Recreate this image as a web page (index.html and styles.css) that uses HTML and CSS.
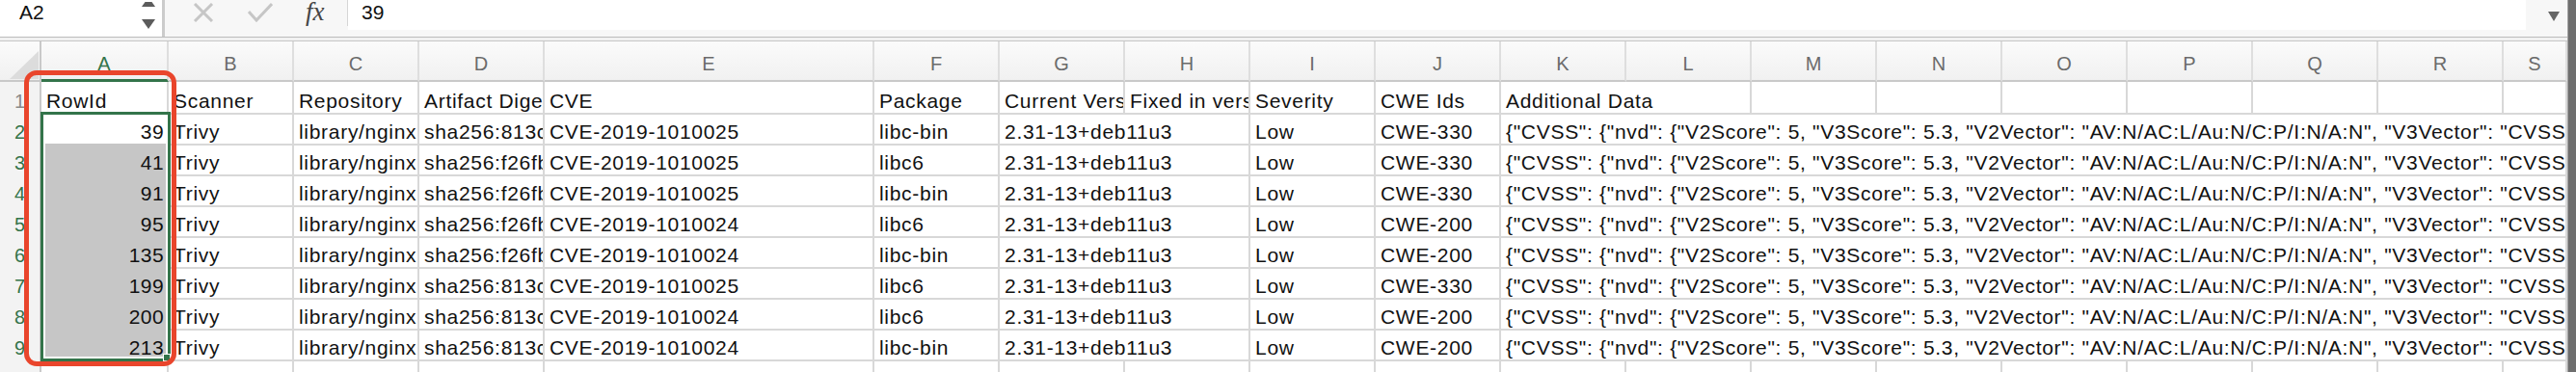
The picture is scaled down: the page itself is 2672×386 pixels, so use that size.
FILE: index.html
```html
<!DOCTYPE html>
<html lang="en">
<head>
    <meta charset="UTF-8">
    <meta name="viewport" content="width=device-width, initial-scale=1.0">
    <title>scan-results.xlsx</title>
    <link rel="stylesheet" href="styles.css">
</head>
<body>
    <div class="app">
        <div class="formula-bar">
            <div class="name-box">
                <span>A2</span>
                <svg class="spin" width="14" height="30" viewBox="0 0 14 30">
                    <polygon points="0,5 7,-5 14,5" fill="#5c5c5c"/>
                    <polygon points="0,18 14,18 7,28" fill="#5c5c5c"/>
                </svg>
            </div>
            <div class="bar-tools">
                <svg class="tool-x" width="22" height="20" viewBox="0 0 22 20">
                    <path d="M2 1 L20 19 M20 1 L2 19" stroke="#c6c6c6" stroke-width="3" fill="none"/>
                </svg>
                <svg class="tool-ok" width="26" height="21" viewBox="0 0 26 21">
                    <path d="M1 10 L9 19 L25 2" stroke="#c6c6c6" stroke-width="3" fill="none"/>
                </svg>
                <span class="fx">fx</span>
                <div class="bar-sep"></div>
            </div>
            <div class="formula-input">39</div>
            <div class="bar-end">
                <svg width="12" height="10" viewBox="0 0 12 10">
                    <polygon points="0,0 12,0 6,10" fill="#666"/>
                </svg>
            </div>
        </div>
        <div class="bar-divider"></div>

        <div class="sheet">
            <div class="row head">
                <div class="corner"><div class="corner-mark"></div></div>
                <div class="col sel-col">A</div>
                <div class="col">B</div>
                <div class="col">C</div>
                <div class="col">D</div>
                <div class="col">E</div>
                <div class="col">F</div>
                <div class="col">G</div>
                <div class="col">H</div>
                <div class="col">I</div>
                <div class="col">J</div>
                <div class="col">K</div>
                <div class="col">L</div>
                <div class="col">M</div>
                <div class="col">N</div>
                <div class="col">O</div>
                <div class="col">P</div>
                <div class="col">Q</div>
                <div class="col">R</div>
                <div class="col">S</div>
            </div>

            <div class="row">
                <div class="rh">1</div>
                <div class="cell">RowId</div>
                <div class="cell">Scanner</div>
                <div class="cell">Repository</div>
                <div class="cell">Artifact Digest</div>
                <div class="cell">CVE</div>
                <div class="cell">Package</div>
                <div class="cell">Current Version</div>
                <div class="cell">Fixed in version</div>
                <div class="cell">Severity</div>
                <div class="cell">CWE Ids</div>
                <div class="cell span2">Additional Data</div>
                <div class="cell"></div>
                <div class="cell"></div>
                <div class="cell"></div>
                <div class="cell"></div>
                <div class="cell"></div>
                <div class="cell"></div>
                <div class="cell"></div>
            </div>

            <div class="row">
                <div class="rh on">2</div>
                <div class="cell num">39</div>
                <div class="cell">Trivy</div>
                <div class="cell">library/nginx</div>
                <div class="cell">sha256:813c2a5e9d8b4f1c</div>
                <div class="cell">CVE-2019-1010025</div>
                <div class="cell">libc-bin</div>
                <div class="cell span2">2.31-13+deb11u3</div>
                <div class="cell">Low</div>
                <div class="cell">CWE-330</div>
                <div class="cell span9">{"CVSS": {"nvd": {"V2Score": 5, "V3Score": 5.3, "V2Vector": "AV:N/AC:L/Au:N/C:P/I:N/A:N", "V3Vector": "CVSS:3.1/AV:N/AC:L/PR:N/UI:N/S:U/C:L/I:N/A:N"}}}</div>
            </div>

            <div class="row">
                <div class="rh on">3</div>
                <div class="cell num sel">41</div>
                <div class="cell">Trivy</div>
                <div class="cell">library/nginx</div>
                <div class="cell">sha256:f26fb0e47c3a91d2</div>
                <div class="cell">CVE-2019-1010025</div>
                <div class="cell">libc6</div>
                <div class="cell span2">2.31-13+deb11u3</div>
                <div class="cell">Low</div>
                <div class="cell">CWE-330</div>
                <div class="cell span9">{"CVSS": {"nvd": {"V2Score": 5, "V3Score": 5.3, "V2Vector": "AV:N/AC:L/Au:N/C:P/I:N/A:N", "V3Vector": "CVSS:3.1/AV:N/AC:L/PR:N/UI:N/S:U/C:L/I:N/A:N"}}}</div>
            </div>

            <div class="row">
                <div class="rh on">4</div>
                <div class="cell num sel">91</div>
                <div class="cell">Trivy</div>
                <div class="cell">library/nginx</div>
                <div class="cell">sha256:f26fb0e47c3a91d2</div>
                <div class="cell">CVE-2019-1010025</div>
                <div class="cell">libc-bin</div>
                <div class="cell span2">2.31-13+deb11u3</div>
                <div class="cell">Low</div>
                <div class="cell">CWE-330</div>
                <div class="cell span9">{"CVSS": {"nvd": {"V2Score": 5, "V3Score": 5.3, "V2Vector": "AV:N/AC:L/Au:N/C:P/I:N/A:N", "V3Vector": "CVSS:3.1/AV:N/AC:L/PR:N/UI:N/S:U/C:L/I:N/A:N"}}}</div>
            </div>

            <div class="row">
                <div class="rh on">5</div>
                <div class="cell num sel">95</div>
                <div class="cell">Trivy</div>
                <div class="cell">library/nginx</div>
                <div class="cell">sha256:f26fb0e47c3a91d2</div>
                <div class="cell">CVE-2019-1010024</div>
                <div class="cell">libc6</div>
                <div class="cell span2">2.31-13+deb11u3</div>
                <div class="cell">Low</div>
                <div class="cell">CWE-200</div>
                <div class="cell span9">{"CVSS": {"nvd": {"V2Score": 5, "V3Score": 5.3, "V2Vector": "AV:N/AC:L/Au:N/C:P/I:N/A:N", "V3Vector": "CVSS:3.1/AV:N/AC:L/PR:N/UI:N/S:U/C:L/I:N/A:N"}}}</div>
            </div>

            <div class="row">
                <div class="rh on">6</div>
                <div class="cell num sel">135</div>
                <div class="cell">Trivy</div>
                <div class="cell">library/nginx</div>
                <div class="cell">sha256:f26fb0e47c3a91d2</div>
                <div class="cell">CVE-2019-1010024</div>
                <div class="cell">libc-bin</div>
                <div class="cell span2">2.31-13+deb11u3</div>
                <div class="cell">Low</div>
                <div class="cell">CWE-200</div>
                <div class="cell span9">{"CVSS": {"nvd": {"V2Score": 5, "V3Score": 5.3, "V2Vector": "AV:N/AC:L/Au:N/C:P/I:N/A:N", "V3Vector": "CVSS:3.1/AV:N/AC:L/PR:N/UI:N/S:U/C:L/I:N/A:N"}}}</div>
            </div>

            <div class="row">
                <div class="rh on">7</div>
                <div class="cell num sel">199</div>
                <div class="cell">Trivy</div>
                <div class="cell">library/nginx</div>
                <div class="cell">sha256:813c2a5e9d8b4f1c</div>
                <div class="cell">CVE-2019-1010025</div>
                <div class="cell">libc6</div>
                <div class="cell span2">2.31-13+deb11u3</div>
                <div class="cell">Low</div>
                <div class="cell">CWE-330</div>
                <div class="cell span9">{"CVSS": {"nvd": {"V2Score": 5, "V3Score": 5.3, "V2Vector": "AV:N/AC:L/Au:N/C:P/I:N/A:N", "V3Vector": "CVSS:3.1/AV:N/AC:L/PR:N/UI:N/S:U/C:L/I:N/A:N"}}}</div>
            </div>

            <div class="row">
                <div class="rh on">8</div>
                <div class="cell num sel">200</div>
                <div class="cell">Trivy</div>
                <div class="cell">library/nginx</div>
                <div class="cell">sha256:813c2a5e9d8b4f1c</div>
                <div class="cell">CVE-2019-1010024</div>
                <div class="cell">libc6</div>
                <div class="cell span2">2.31-13+deb11u3</div>
                <div class="cell">Low</div>
                <div class="cell">CWE-200</div>
                <div class="cell span9">{"CVSS": {"nvd": {"V2Score": 5, "V3Score": 5.3, "V2Vector": "AV:N/AC:L/Au:N/C:P/I:N/A:N", "V3Vector": "CVSS:3.1/AV:N/AC:L/PR:N/UI:N/S:U/C:L/I:N/A:N"}}}</div>
            </div>

            <div class="row">
                <div class="rh on">9</div>
                <div class="cell num sel">213</div>
                <div class="cell">Trivy</div>
                <div class="cell">library/nginx</div>
                <div class="cell">sha256:813c2a5e9d8b4f1c</div>
                <div class="cell">CVE-2019-1010024</div>
                <div class="cell">libc-bin</div>
                <div class="cell span2">2.31-13+deb11u3</div>
                <div class="cell">Low</div>
                <div class="cell">CWE-200</div>
                <div class="cell span9">{"CVSS": {"nvd": {"V2Score": 5, "V3Score": 5.3, "V2Vector": "AV:N/AC:L/Au:N/C:P/I:N/A:N", "V3Vector": "CVSS:3.1/AV:N/AC:L/PR:N/UI:N/S:U/C:L/I:N/A:N"}}}</div>
            </div>

            <div class="row">
                <div class="rh">10</div>
                <div class="cell"></div>
                <div class="cell"></div>
                <div class="cell"></div>
                <div class="cell"></div>
                <div class="cell"></div>
                <div class="cell"></div>
                <div class="cell"></div>
                <div class="cell"></div>
                <div class="cell"></div>
                <div class="cell"></div>
                <div class="cell"></div>
                <div class="cell"></div>
                <div class="cell"></div>
                <div class="cell"></div>
                <div class="cell"></div>
                <div class="cell"></div>
                <div class="cell"></div>
                <div class="cell"></div>
                <div class="cell"></div>
            </div>

            <!-- selection A2:A9 and the red mark drawn over the grid -->
            <div class="selection"><div class="fill-handle"></div></div>
            <div class="mark"></div>
        </div>
    </div>
    <div class="edge"></div>
</body>
</html>
```

FILE: styles.css
```css
body {
    margin: 0;
    width: 2672px;
    height: 386px;
    overflow: hidden;
    display: flex;
    background: #fff;
    font-family: 'Liberation Sans', Arial, sans-serif;
    color: #111;
}

.app {
    flex: 1;
    min-width: 0;
    display: flex;
    flex-direction: column;
}

.edge {
    width: 9px;
    background: #6e6e6e;
    border-left: 1px solid #a3a3a3;
    box-sizing: border-box;
}

/* formula bar */
.formula-bar {
    display: flex;
    height: 38px;
    background: #f7f7f7;
}

.name-box {
    width: 171px;
    box-sizing: border-box;
    background: #fff;
    border-right: 3px solid #cbcbcb;
    display: flex;
    justify-content: space-between;
    padding: 2px 7px 0 20px;
    font-size: 21px;
    line-height: 21px;
}

.spin {
    display: block;
}

.bar-tools {
    width: 190px;
    display: flex;
    align-items: flex-start;
}

.tool-x {
    margin: 3px 0 0 29px;
}

.tool-ok {
    margin: 2px 0 0 35px;
}

.fx {
    margin-left: 34px;
    width: 26px;
    font-family: 'Liberation Serif', 'Times New Roman', serif;
    font-style: italic;
    font-size: 27px;
    line-height: 24px;
    color: #454545;
}

.bar-sep {
    width: 1px;
    height: 27px;
    margin-left: auto;
    background: #d6d6d6;
}

.formula-input {
    flex: 1;
    height: 31px;
    background: #fff;
    padding: 2px 0 0 14px;
    box-sizing: border-box;
    font-size: 21px;
    line-height: 21px;
}

.bar-end {
    width: 43px;
    box-sizing: border-box;
    padding: 8px 0 0 23px;
}

.bar-divider {
    height: 5px;
    box-sizing: border-box;
    border-top: 1px solid #bcbcbc;
    border-bottom: 1px solid #c6c6c6;
    background: #f1f1f1;
}

/* sheet grid */
.sheet {
    position: relative;
    flex: 1;
    overflow: hidden;
}

.row {
    display: grid;
    grid-template-columns: 43px 132px 130px 130px 130px 342px repeat(13, 130px) 66px;
    height: 32px;
}

.row.head {
    height: 42px;
    background: linear-gradient(#fbfbfb, #f0f0f0);
}

.corner {
    border-right: 2px solid #c9c9c9;
    border-bottom: 2px solid #c9c9c9;
    display: flex;
    justify-content: flex-end;
    align-items: flex-end;
    padding: 0 1px 1px 0;
}

.corner-mark {
    width: 30px;
    height: 29px;
    background: #dcdcdc;
    clip-path: polygon(100% 0, 100% 100%, 0 100%);
}

.col {
    border-right: 2px solid #dedede;
    border-bottom: 2px solid #c9c9c9;
    text-align: center;
    font-size: 20px;
    line-height: 33px;
    padding-top: 7px;
    color: #6b6b6b;
    overflow: hidden;
}

.col.sel-col {
    color: #33744a;
    border-bottom: 3px solid #33744a;
}

.rh {
    background: #f3f3f3;
    border-right: 2px solid #c9c9c9;
    border-bottom: 2px solid #dcdcdc;
    text-align: center;
    font-size: 20px;
    line-height: 24px;
    padding-top: 8px;
    color: #8a8a8a;
}

.rh.on {
    color: #33744a;
}

.cell {
    border-right: 2px solid #d8d8d8;
    border-bottom: 2px solid #d8d8d8;
    padding: 8px 4px 0 5px;
    font-size: 21px;
    line-height: 24px;
    letter-spacing: 0.7px;
    white-space: nowrap;
    overflow: hidden;
    min-width: 0;
}

.cell.num {
    text-align: right;
    padding-right: 3px;
    letter-spacing: 0.4px;
}

.cell.sel {
    background: #c6c6c6;
    border-bottom-color: #a6a6a6;
}

.span2 {
    grid-column: span 2;
}

.span9 {
    grid-column: span 9;
}

/* overlays */
.selection {
    position: absolute;
    left: 42px;
    top: 73px;
    width: 135px;
    height: 259px;
    box-sizing: border-box;
    border: 3px solid #33744a;
    box-shadow: inset 0 0 0 2px #fff;
}

.fill-handle {
    position: absolute;
    right: -2px;
    bottom: -2px;
    width: 6px;
    height: 6px;
    background: #33744a;
    outline: 1px solid #fff;
}

.mark {
    position: absolute;
    left: 25px;
    top: 30px;
    width: 158px;
    height: 307px;
    box-sizing: border-box;
    border: 5px solid #e9452c;
    border-radius: 13px;
}
```
